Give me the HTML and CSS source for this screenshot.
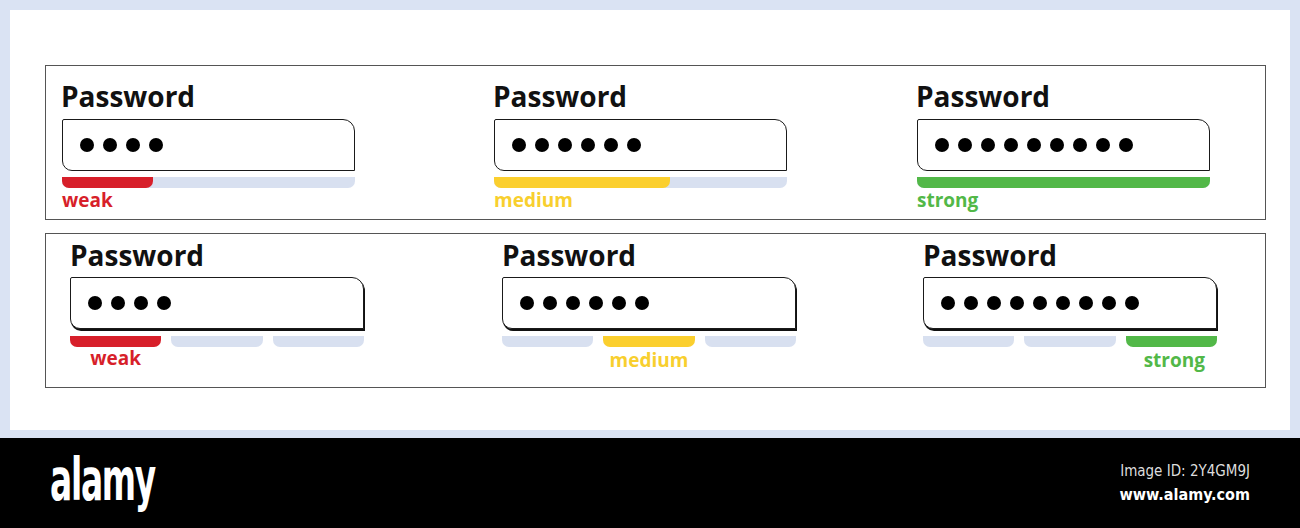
FILE: index.html
```html
<!DOCTYPE html>
<html lang="en">
<head>
  <meta charset="UTF-8" />
  <meta name="viewport" content="width=device-width, initial-scale=1.0"/>
  <title>Password Strength</title>
  <link rel="stylesheet" href="styles.css">
</head>
<body>

  <div class="canvas">

    <!-- continuous bar variant -->
    <div class="panel panel-bar">
      <div class="field">
        <div class="label">Password</div>
        <div class="input"><span></span><span></span><span></span><span></span></div>
        <div class="track"><div class="fill weak" style="width: 31%"></div></div>
        <div class="strength weak">weak</div>
      </div>
      <div class="field">
        <div class="label">Password</div>
        <div class="input"><span></span><span></span><span></span><span></span><span></span><span></span></div>
        <div class="track"><div class="fill medium" style="width: 60%"></div></div>
        <div class="strength medium">medium</div>
      </div>
      <div class="field">
        <div class="label">Password</div>
        <div class="input"><span></span><span></span><span></span><span></span><span></span><span></span><span></span><span></span><span></span></div>
        <div class="track"><div class="fill strong" style="width: 100%"></div></div>
        <div class="strength strong">strong</div>
      </div>
    </div>

    <!-- segmented variant -->
    <div class="panel panel-seg">
      <div class="field">
        <div class="label">Password</div>
        <div class="input raised"><span></span><span></span><span></span><span></span></div>
        <div class="segments">
          <div class="seg weak"></div>
          <div class="seg"></div>
          <div class="seg"></div>
          <div class="seg-label strength weak col-1">weak</div>
        </div>
      </div>
      <div class="field">
        <div class="label">Password</div>
        <div class="input raised"><span></span><span></span><span></span><span></span><span></span><span></span></div>
        <div class="segments">
          <div class="seg"></div>
          <div class="seg medium"></div>
          <div class="seg"></div>
          <div class="seg-label strength medium col-2">medium</div>
        </div>
      </div>
      <div class="field">
        <div class="label">Password</div>
        <div class="input raised"><span></span><span></span><span></span><span></span><span></span><span></span><span></span><span></span><span></span></div>
        <div class="segments">
          <div class="seg"></div>
          <div class="seg"></div>
          <div class="seg strong"></div>
          <div class="seg-label strength strong col-3">strong</div>
        </div>
      </div>
    </div>

  </div>

  <div class="footer">
    <div class="logo">alamy</div>
    <div class="meta">
      <div class="image-id">Image ID: 2Y4GM9J</div>
      <div class="site">www.alamy.com</div>
    </div>
  </div>

</body>
</html>
```

FILE: styles.css
```css
body {
  font-family: 'Open Sans', 'Noto Sans', sans-serif;
  background-color: #dae3f3;
  margin: 0;
  padding: 10px 0 0;
}
.canvas {
  margin: 0 10px 8px;
  height: 420px;
  box-sizing: border-box;
  background-color: #fff;
  padding: 55px 24px 0 35px;
}
.panel {
  height: 155px;
  box-sizing: border-box;
  border: 1px solid #555;
  display: grid;
  align-items: start;
}
.panel-bar {
  grid-template-columns: 432px 423px 293px;
  padding: 14px 0 0 16px;
}
.panel-bar .field {
  width: 293px;
}
.panel-seg {
  margin-top: 13px;
  grid-template-columns: 432px 421px 297px;
  padding: 5px 0 0 24px;
}
.label {
  font-size: 28px;
  font-weight: 700;
  line-height: 32px;
  color: #111;
}
.panel-bar .label {
  margin-left: -1px;
}
.input {
  height: 52px;
  box-sizing: border-box;
  border: 1.5px solid #1a1a1a;
  border-radius: 2px 12px 0 10px;
  margin-top: 7px;
  display: flex;
  align-items: center;
  gap: 9px;
  padding-left: 17px;
  background: #fff;
}
.input span {
  width: 14px;
  height: 14px;
  border-radius: 50%;
  background: #000;
}
.input.raised {
  width: 294px;
  margin-top: 6px;
  box-shadow: 1px 2px 0 #111;
}
.track {
  height: 11px;
  margin-top: 6px;
  background: #d8e0f0;
  border-radius: 0 0 7px 7px;
}
.fill {
  height: 100%;
  border-radius: 0 0 7px 7px;
}
.fill.weak, .seg.weak { background: #d71f2a; }
.fill.medium, .seg.medium { background: #fbcf2e; }
.fill.strong, .seg.strong { background: #52b848; }
.strength {
  font-size: 19px;
  font-weight: 700;
  line-height: 22px;
  margin-top: 1px;
}
.strength.weak { color: #d71f2a; }
.strength.medium { color: #f8cf2e; }
.strength.strong { color: #52b848; }
.segments {
  width: 294px;
  display: grid;
  grid-template-columns: 1fr 1fr 1fr;
  column-gap: 10px;
  margin-top: 7px;
}
.seg {
  height: 11px;
  background: #d8e0f0;
  border-radius: 0 0 7px 7px;
}
.seg-label {
  text-align: center;
  line-height: 18px;
  margin-top: 2px;
}
.col-1 { grid-column: 1; }
.col-2 { grid-column: 2; margin-top: 4px; }
.col-3 { grid-column: 3; margin-top: 4px; padding-left: 6px; }
.footer {
  height: 90px;
  background: #000;
  display: flex;
  justify-content: space-between;
  align-items: center;
  padding: 0 50px;
}
.logo {
  font-family: 'DejaVu Sans', sans-serif;
  font-stretch: condensed;
  font-weight: 700;
  font-size: 58px;
  letter-spacing: -2px;
  color: #fff;
  line-height: 1;
  margin-top: -6px;
  transform: scaleX(0.63);
  transform-origin: left center;
}
.meta {
  text-align: right;
  font-family: 'DejaVu Sans', sans-serif;
  font-stretch: condensed;
  color: #fff;
}
.image-id {
  font-size: 15px;
  color: #ddd;
  line-height: 20px;
}
.site {
  font-size: 16px;
  font-weight: 700;
  line-height: 22px;
  margin-top: 3px;
}
```
